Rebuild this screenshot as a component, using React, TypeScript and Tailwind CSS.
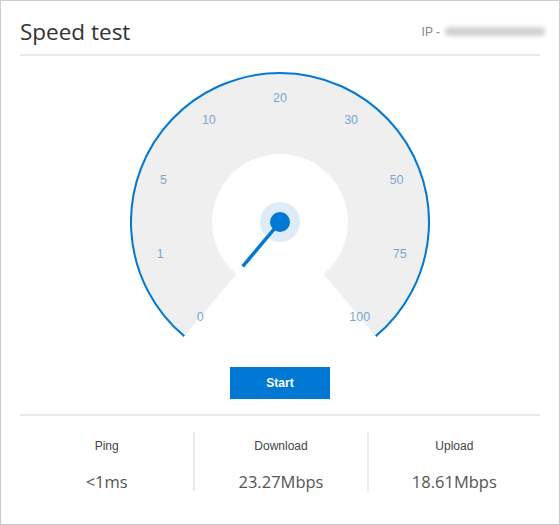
import React from "react";

const CX = 150;
const CY = 151;
const R_OUT = 149;
const R_IN = 68;
const R_LABEL = 124;

const ticks = ["0", "1", "5", "10", "20", "30", "50", "75", "100"];

const pt = (deg: number, r: number) => {
  const a = (deg * Math.PI) / 180;
  return [CX + r * Math.sin(a), CY - r * Math.cos(a)];
};

const Gauge = ({ value }: { value: number }) => {
  const [ox1, oy1] = pt(-140, R_OUT);
  const [ox2, oy2] = pt(140, R_OUT);
  const [ix1, iy1] = pt(-140, R_IN);
  const [ix2, iy2] = pt(140, R_IN);
  const needleDeg = -140 + value * 280;
  const [nx, ny] = pt(needleDeg, 58);

  return (
    <svg width="300" height="268" viewBox="0 0 300 268" className="mx-auto block">
      <path
        d={`M ${ox1} ${oy1} A ${R_OUT} ${R_OUT} 0 1 1 ${ox2} ${oy2} L ${ix2} ${iy2} A ${R_IN} ${R_IN} 0 1 0 ${ix1} ${iy1} Z`}
        fill="#efefef"
      />
      <path
        d={`M ${ox1} ${oy1} A ${R_OUT} ${R_OUT} 0 1 1 ${ox2} ${oy2}`}
        fill="none"
        stroke="#0078d4"
        strokeWidth="2"
      />
      {ticks.map((t, i) => {
        const [x, y] = pt(-140 + i * 35, R_LABEL);
        return (
          <text
            key={t}
            x={x}
            y={y}
            textAnchor="middle"
            dominantBaseline="central"
            fontSize="12.5"
            fill="#7aa7d6"
            fontFamily="'Liberation Sans', Arial, sans-serif"
          >
            {t}
          </text>
        );
      })}
      <circle cx={CX} cy={CY} r="20" fill="#deecf9" />
      <line x1={CX} y1={CY} x2={nx} y2={ny} stroke="#0078d4" strokeWidth="3.5" />
      <circle cx={CX} cy={CY} r="10" fill="#0078d4" />
    </svg>
  );
};

const Stat = ({ label, value, first }: { label: string; value: string; first?: boolean }) => (
  <div className={`flex h-[59px] flex-col items-center ${first ? "" : "border-l-2 border-[#ebebeb]"}`}>
    <p className="pt-[6px] font-['Liberation_Sans',Arial,sans-serif] text-xs leading-4 text-[#444]">{label}</p>
    <p className="mt-[18px] font-['Open_Sans',sans-serif] text-[16.5px] leading-5 text-[#555]">{value}</p>
  </div>
);

export default function App() {
  return (
    <div className="h-[525px] w-[560px] border border-[#cccccc] bg-white px-[19px]">
      <div className="flex h-[55px] items-center justify-between border-b-2 border-[#ebebeb] pt-2">
        <h1 className="font-['Open_Sans',sans-serif] text-[22.5px] text-[#333]">Speed test</h1>
        <div className="-mr-[5px] flex items-center gap-[5px]">
          <span className="font-['Liberation_Sans',Arial,sans-serif] text-xs text-[#888]">IP -</span>
          <div className="h-[9px] w-[100px] rounded bg-[#d2d2d2] blur-[2px]" />
        </div>
      </div>

      <div className="mt-[15px]">
        <Gauge value={0} />
      </div>

      <button className="mx-auto mt-[28px] block h-[32px] w-[100px] bg-[#0078d4] font-['Liberation_Sans',Arial,sans-serif] text-xs font-bold text-white">
        Start
      </button>

      <div className="mt-[15px] border-t-2 border-[#ebebeb]" />

      <div className="mt-[16px] grid grid-cols-3">
        <Stat label="Ping" value="<1ms" first />
        <Stat label="Download" value="23.27Mbps" />
        <Stat label="Upload" value="18.61Mbps" />
      </div>
    </div>
  );
}
